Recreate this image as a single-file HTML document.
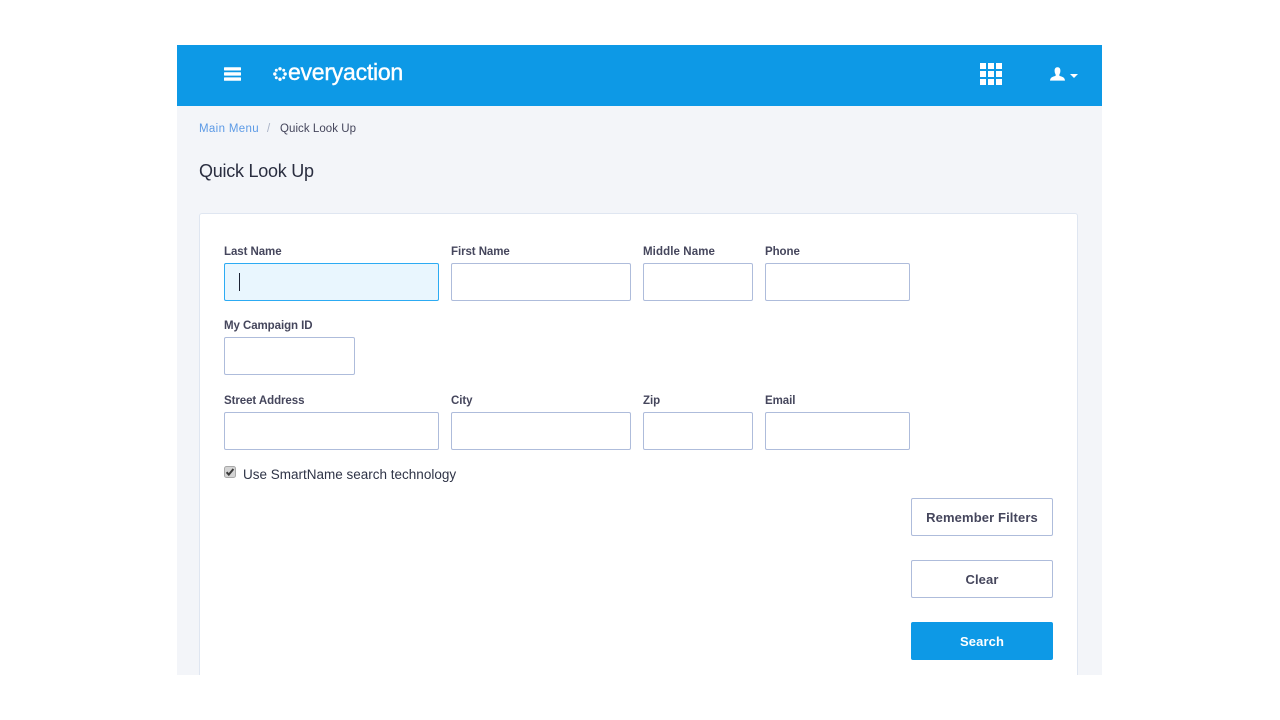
<!DOCTYPE html>
<html lang="en">
<head>
<meta charset="utf-8">
<title>Quick Look Up</title>
<style>
html,body{margin:0;padding:0;background:#fff;width:1280px;height:720px;overflow:hidden}
body{position:relative;font-family:"Liberation Sans",sans-serif;color:#2f3447}
.page{position:absolute;left:177px;top:45px;width:925px;height:630px;background:#f3f5f9;overflow:hidden}
.top{position:absolute;left:177px;top:45px;width:925px;height:61px;background:#0d99e6}
.card{position:absolute;left:199px;top:213px;width:877px;height:470px;background:#fff;border:1px solid #dfe6f1;border-radius:3px}
.clip{position:absolute;left:0;top:0;width:1280px;height:675px;overflow:hidden}
.t{position:absolute;white-space:nowrap;line-height:16px}
.l{font-size:11.5px;font-weight:bold;color:#45465c;letter-spacing:-.07px}
.i{position:absolute;box-sizing:border-box;height:38px;background:#fff;border:1px solid #aebcdb;border-radius:2px}
.i.f{background:#e9f6fe;border-color:#2cabf3}
.b{position:absolute;box-sizing:border-box;left:911px;width:142px;height:38px;border:1px solid #aebcdb;border-radius:2px;background:#fff;font-size:13px;font-weight:bold;color:#45465c;text-align:center;line-height:37px;letter-spacing:.12px}
.b.p{background:#0d99e6;border-color:#0d99e6;color:#fff}
svg{position:absolute;display:block}
</style>
</head>
<body>
<div class="page"></div>
<div class="top"></div>

<svg style="left:224px;top:67px" width="17" height="14" viewBox="0 0 17 14"><g fill="#fff"><rect x="0" y="0.2" width="17" height="3.3" rx=".6"/><rect x="0" y="5.3" width="17" height="3.3" rx=".6"/><rect x="0" y="10.4" width="17" height="3.4" rx=".6"/></g></svg>

<svg style="left:273px;top:67px" width="14" height="14" viewBox="0 0 14 14"><g fill="#fff"><circle cx="7" cy="1.8" r="1.7"/><circle cx="7" cy="12.2" r="1.7"/><circle cx="1.8" cy="7" r="1.7"/><circle cx="12.2" cy="7" r="1.7"/><circle cx="3.3" cy="3.3" r="1.5"/><circle cx="10.7" cy="3.3" r="1.5"/><circle cx="3.3" cy="10.7" r="1.5"/><circle cx="10.7" cy="10.7" r="1.5"/></g></svg>
<div class="t" style="left:288px;top:61px;font-size:23px;line-height:23px;color:#fff;letter-spacing:-.24px;-webkit-text-stroke:.4px #fff">everyaction</div>

<svg style="left:980px;top:63px" width="22" height="22" viewBox="0 0 22 22"><g fill="#fff"><rect x="0" y="0" width="6" height="6"/><rect x="8" y="0" width="6" height="6"/><rect x="16" y="0" width="6" height="6"/><rect x="0" y="8" width="6" height="6"/><rect x="8" y="8" width="6" height="6"/><rect x="16" y="8" width="6" height="6"/><rect x="0" y="16" width="6" height="6"/><rect x="8" y="16" width="6" height="6"/><rect x="16" y="16" width="6" height="6"/></g></svg>
<svg style="left:1050px;top:67px" width="15" height="14" viewBox="0 0 15 14"><path fill="#fff" d="M7.5 0.2C9.4 0.2 10.4 1.5 10.4 3.6C10.4 5.2 10 6.5 9.4 7.3V8.9C11.5 9.6 14.7 9.9 15 13.6H0C0.3 9.9 3.5 9.6 5.6 8.9V7.3C5 6.5 4.6 5.2 4.6 3.6C4.6 1.5 5.6 0.2 7.5 0.2Z"/></svg>
<svg style="left:1070px;top:74px" width="8" height="4" viewBox="0 0 8 4"><path fill="#fff" d="M0 0H8L4 4Z"/></svg>

<div class="t" style="left:199px;top:121px;font-size:11.5px;color:#5c9ae6;letter-spacing:.35px">Main Menu</div>
<div class="t" style="left:267px;top:121px;font-size:11.5px;color:#a9b2c6">/</div>
<div class="t" style="left:280px;top:121px;font-size:11.5px;color:#45465c;letter-spacing:.05px">Quick Look Up</div>
<div class="t" style="left:199px;top:160px;font-size:18px;line-height:22px;color:#2a2e40;letter-spacing:-.25px">Quick Look Up</div>

<div class="clip">
<div class="card"></div>

<div class="t l" style="left:224px;top:244px">Last Name</div>
<div class="t l" style="left:451px;top:244px">First Name</div>
<div class="t l" style="left:643px;top:244px;letter-spacing:.1px">Middle Name</div>
<div class="t l" style="left:765px;top:244px">Phone</div>
<div class="i f" style="left:224px;top:263px;width:215px"></div>
<div style="position:absolute;left:239px;top:273px;width:1px;height:18px;background:#1c2233"></div>
<div class="i" style="left:451px;top:263px;width:180px"></div>
<div class="i" style="left:643px;top:263px;width:110px"></div>
<div class="i" style="left:765px;top:263px;width:145px"></div>

<div class="t l" style="left:224px;top:318px">My Campaign ID</div>
<div class="i" style="left:224px;top:337px;width:131px"></div>

<div class="t l" style="left:224px;top:393px">Street Address</div>
<div class="t l" style="left:451px;top:393px">City</div>
<div class="t l" style="left:643px;top:393px">Zip</div>
<div class="t l" style="left:765px;top:393px">Email</div>
<div class="i" style="left:224px;top:412px;width:215px"></div>
<div class="i" style="left:451px;top:412px;width:180px"></div>
<div class="i" style="left:643px;top:412px;width:110px"></div>
<div class="i" style="left:765px;top:412px;width:145px"></div>

<svg style="left:224px;top:466px" width="12" height="12" viewBox="0 0 12 12"><rect x=".5" y=".5" width="11" height="11" rx="2" fill="#d4d4d4" stroke="#a8a8a8"/><path d="M2.6 6.2L4.8 8.6L9.4 3" fill="none" stroke="#3a3a3a" stroke-width="2"/></svg>
<div class="t" style="left:243px;top:467px;font-size:13.5px;color:#2f3447;letter-spacing:0">Use SmartName search technology</div>

<div class="b" style="top:498px">Remember Filters</div>
<div class="b" style="top:560px">Clear</div>
<div class="b p" style="top:622px">Search</div>
</div>
</body>
</html>
